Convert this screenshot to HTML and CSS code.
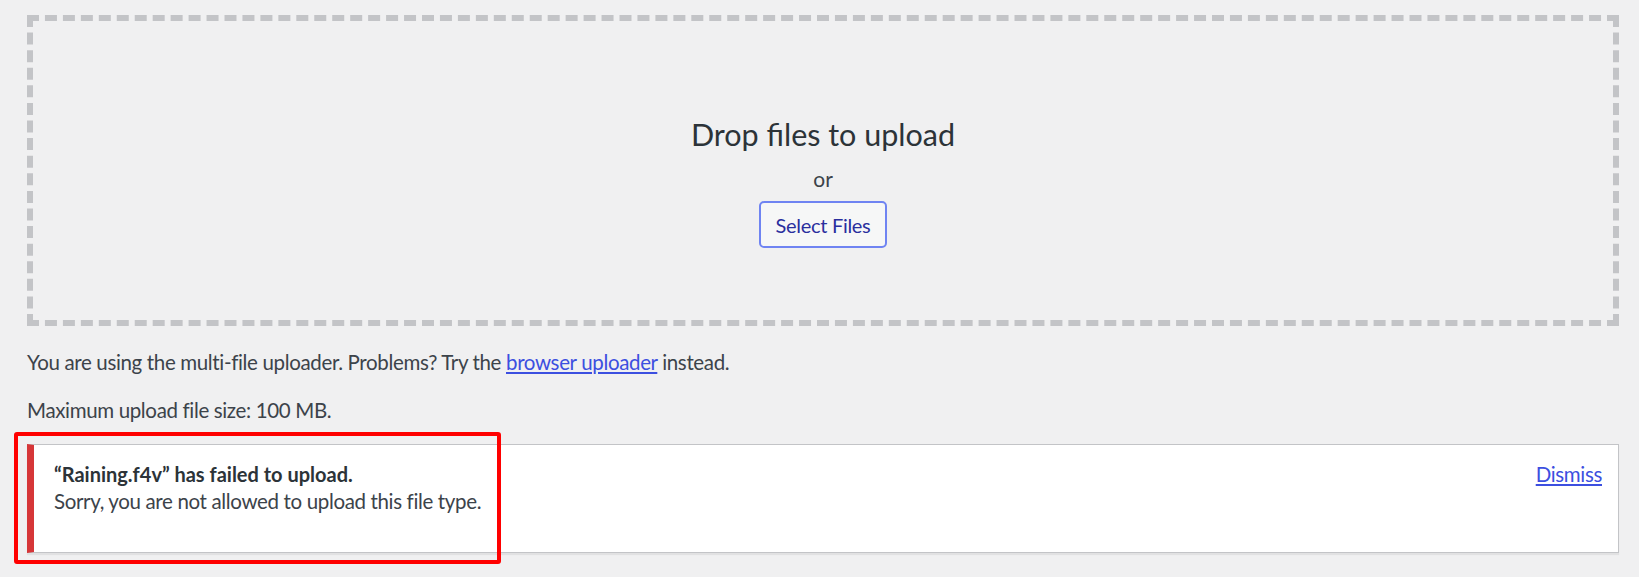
FILE: index.html
```html
<!DOCTYPE html>
<html lang="en">
<head>
<meta charset="utf-8">
<title>Upload New Media</title>
<link rel="stylesheet" href="styles.css">
</head>
<body>
<div class="wrap">
  <div class="drop-area">
    <p class="drop-title">Drop files to upload</p>
    <p class="drop-or">or</p>
    <button type="button" class="select-btn">Select Files</button>
  </div>
  <p class="info">You are using the multi-file uploader. Problems? Try the <a href="#" class="link">browser uploader</a> instead.</p>
  <p class="info">Maximum upload file size: 100 MB.</p>
  <div class="notice">
    <a href="#" class="link dismiss">Dismiss</a>
    <strong class="notice-title">“Raining.f4v” has failed to upload.</strong>
    <span class="notice-text">Sorry, you are not allowed to upload this file type.</span>
    <div class="highlight"></div>
  </div>
</div>
</body>
</html>
```
FILE: styles.css
```css
html, body {
  margin: 0;
  padding: 0;
  background: #f0f0f1;
}
body {
  font-family: Lato, "Noto Sans", sans-serif;
  color: #3c434a;
  min-height: 577px;
}
.wrap {
  padding: 15px 20px 30px 27px;
}
.drop-area {
  border: 6px dashed #c3c4c7;
  height: 299px;
  box-sizing: content-box;
  display: flex;
  flex-direction: column;
  align-items: center;
}
.drop-title {
  margin: 93px 0 0;
  font-size: 30.5px;
  line-height: 40px;
  color: #2c3338;
}
.drop-or {
  margin: 11px 0 0;
  font-size: 21px;
  line-height: 28px;
  color: #3c434a;
}
.select-btn {
  margin-top: 8px;
  height: 47px;
  width: 128px;
  padding: 0;
  font-family: inherit;
  font-size: 20px;
  letter-spacing: -0.3px;
  color: #2a2f9e;
  background: #f6f7f7;
  border: 2px solid #6f84f2;
  border-radius: 5px;
}
.info {
  margin: 22px 0 0;
  font-size: 20.5px;
  letter-spacing: -0.35px;
  line-height: 28px;
}
.info + .info {
  margin-top: 20px;
}
.link {
  color: #3c4fe0;
  text-decoration: underline;
}
.notice {
  position: relative;
  margin-top: 20px;
  background: #fff;
  border: 1px solid #c3c4c7;
  border-left: 7px solid #d63638;
  box-shadow: 0 2px 1px rgba(0, 0, 0, 0.06);
  padding: 16px 16px 37px 20px;
  font-size: 20.5px;
  letter-spacing: -0.35px;
  line-height: 27px;
  display: flex;
  flex-direction: column;
  align-items: flex-start;
}
.notice-title {
  font-weight: 700;
  font-size: 20px;
  letter-spacing: 0;
  color: #2c3338;
}
.notice-text {
  color: #3c434a;
}
.dismiss {
  position: absolute;
  right: 16px;
  top: 16px;
}
.highlight {
  position: absolute;
  left: -20px;
  top: -13px;
  width: 479px;
  height: 124px;
  border: 4px solid #ff0000;
  border-radius: 3px;
  pointer-events: none;
}
```
